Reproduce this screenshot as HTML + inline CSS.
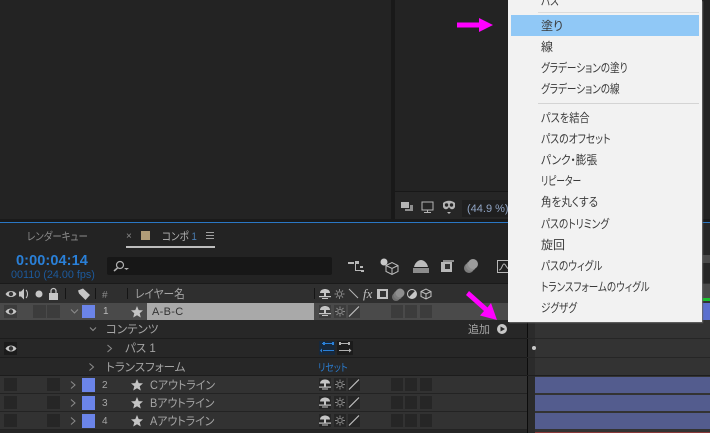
<!DOCTYPE html>
<html lang="ja"><head><meta charset="utf-8">
<style>
html,body{margin:0;padding:0;background:#232323}
#p{position:relative;width:710px;height:433px;overflow:hidden;background:#232323;font-family:"Liberation Sans","Noto Sans CJK JP",sans-serif;font-feature-settings:"palt";color:#a5a5a5;font-size:11.5px}
.b,.t{position:absolute}
.t{white-space:nowrap;line-height:16px;height:16px;transform-origin:0 50%}
.m{position:absolute;left:541px;color:#3a3a3a;font-size:12px;line-height:16px;white-space:nowrap;transform-origin:0 50%}
svg{position:absolute;left:0;top:0}
</style></head><body><div id="p">
<!-- upper panel -->
<div class="b" style="left:391px;top:0;width:4px;height:219px;background:#191919"></div>
<div class="b" style="left:395px;top:192px;width:113px;height:27px;background:#262626"></div>
<div class="b" style="left:395px;top:191px;width:113px;height:1px;background:#181818"></div>
<div class="b" style="left:0;top:219px;width:710px;height:3px;background:#1a1a1a"></div>
<div class="b" style="left:0;top:222px;width:710px;height:1px;background:#2a77c4"></div>
<div class="b" style="left:462px;top:200px;width:46px;height:17px;background:#1f1f1f"></div>
<div class="t" style="left:467px;top:201px;color:#90a4c4;font-size:11px">(44.9 %)</div>
<!-- tabs -->
<div class="t" style="left:27px;top:229px;color:#8c8c8c;font-size:11px;transform:scaleX(.86)">レンダーキュー</div>
<div class="t" style="left:126px;top:229px;color:#8c8c8c;font-size:10px">×</div>
<div class="b" style="left:141px;top:231px;width:9px;height:9px;background:#b09c78"></div>
<div class="t" style="left:162px;top:229px;color:#b5b5b5;font-size:11px;transform:scaleX(.87)">コンポ <span style="color:#4a7fb5">1</span></div>
<div class="b" style="left:126px;top:246px;width:89px;height:2px;background:#bdbdbd"></div>
<!-- timecode -->
<div class="t" style="left:16px;top:253px;color:#2a80d8;font-size:14.5px;font-weight:bold;letter-spacing:.1px">0:00:04:14</div>
<div class="t" style="left:11px;top:267px;color:#1d5a9c;font-size:10.8px">00110 (24.00 fps)</div>
<div class="b" style="left:107px;top:257px;width:225px;height:18px;background:#171717;border-radius:2px"></div>
<!-- header -->
<div class="b" style="left:0;top:283px;width:527px;height:20px;background:#2f2f2f;border-top:1px solid #1a1a1a;box-sizing:border-box"></div>
<div class="b" style="left:65px;top:288px;width:1px;height:11px;background:#151515"></div>
<div class="b" style="left:95px;top:288px;width:1px;height:11px;background:#151515"></div>
<div class="b" style="left:127px;top:288px;width:1px;height:11px;background:#151515"></div>
<div class="b" style="left:314px;top:288px;width:1px;height:11px;background:#151515"></div>
<div class="t" style="left:102px;top:288px;color:#8a8a8a;font-size:10px">#</div>
<div class="t" style="left:135px;top:286px;color:#a5a5a5;font-size:12px;transform:scaleX(.89)">レイヤー名</div>
<!-- rows -->
<div class="b" style="left:0;top:303px;width:527px;height:17px;background:#4a4a4a"></div>
<div class="b" style="left:147px;top:303px;width:167px;height:17px;background:#a9a9a9"></div>
<div class="b" style="left:0;top:320px;width:527px;height:19px;background:#272727;border-bottom:1px solid #1c1c1c;box-sizing:border-box"></div>
<div class="b" style="left:0;top:339px;width:527px;height:19px;background:#272727;border-bottom:1px solid #1c1c1c;box-sizing:border-box"></div>
<div class="b" style="left:0;top:358px;width:527px;height:18px;background:#272727;border-bottom:1px solid #1c1c1c;box-sizing:border-box"></div>
<div class="b" style="left:0;top:376px;width:527px;height:18px;background:#323232;border-bottom:1px solid #232323;box-sizing:border-box"></div>
<div class="b" style="left:0;top:394px;width:527px;height:18px;background:#323232;border-bottom:1px solid #232323;box-sizing:border-box"></div>
<div class="b" style="left:0;top:412px;width:527px;height:18px;background:#323232;border-bottom:1px solid #232323;box-sizing:border-box"></div>
<div class="b" style="left:0;top:430px;width:527px;height:3px;background:#262626"></div>
<!-- boxes -->
<div class="b" style="left:4px;top:305px;width:13px;height:13px;background:#3c3c3c"></div>
<div class="b" style="left:33px;top:305px;width:13px;height:13px;background:#3c3c3c"></div>
<div class="b" style="left:47px;top:305px;width:13px;height:13px;background:#3c3c3c"></div>
<div class="b" style="left:4px;top:342px;width:13px;height:13px;background:#1b1b1b"></div>
<div class="b" style="left:4px;top:378px;width:13px;height:13px;background:#262626"></div><div class="b" style="left:47px;top:378px;width:13px;height:13px;background:#262626"></div>
<div class="b" style="left:4px;top:396px;width:13px;height:13px;background:#262626"></div><div class="b" style="left:47px;top:396px;width:13px;height:13px;background:#262626"></div>
<div class="b" style="left:4px;top:414px;width:13px;height:13px;background:#262626"></div><div class="b" style="left:47px;top:414px;width:13px;height:13px;background:#262626"></div>
<div class="b" style="left:82px;top:305px;width:13px;height:13px;background:#6b84e8"></div>
<div class="b" style="left:82px;top:378px;width:13px;height:14px;background:#6b84e8"></div>
<div class="b" style="left:82px;top:396px;width:13px;height:14px;background:#6b84e8"></div>
<div class="b" style="left:82px;top:414px;width:13px;height:14px;background:#6b84e8"></div>
<!-- switch boxes -->
<div class="b" style="left:319px;top:305px;width:12px;height:13px;background:#3c3c3c"></div><div class="b" style="left:334px;top:305px;width:12px;height:13px;background:#3c3c3c"></div><div class="b" style="left:348px;top:305px;width:12px;height:13px;background:#3c3c3c"></div>
<div class="b" style="left:391px;top:305px;width:12px;height:13px;background:#3c3c3c"></div><div class="b" style="left:405px;top:305px;width:12px;height:13px;background:#3c3c3c"></div><div class="b" style="left:420px;top:305px;width:12px;height:13px;background:#3c3c3c"></div>
<div class="b" style="left:319px;top:378px;width:12px;height:13px;background:#262626"></div><div class="b" style="left:334px;top:378px;width:12px;height:13px;background:#262626"></div><div class="b" style="left:348px;top:378px;width:12px;height:13px;background:#262626"></div>
<div class="b" style="left:391px;top:378px;width:12px;height:13px;background:#262626"></div><div class="b" style="left:405px;top:378px;width:12px;height:13px;background:#262626"></div><div class="b" style="left:420px;top:378px;width:12px;height:13px;background:#262626"></div>
<div class="b" style="left:319px;top:396px;width:12px;height:13px;background:#262626"></div><div class="b" style="left:334px;top:396px;width:12px;height:13px;background:#262626"></div><div class="b" style="left:348px;top:396px;width:12px;height:13px;background:#262626"></div>
<div class="b" style="left:391px;top:396px;width:12px;height:13px;background:#262626"></div><div class="b" style="left:405px;top:396px;width:12px;height:13px;background:#262626"></div><div class="b" style="left:420px;top:396px;width:12px;height:13px;background:#262626"></div>
<div class="b" style="left:319px;top:414px;width:12px;height:13px;background:#262626"></div><div class="b" style="left:334px;top:414px;width:12px;height:13px;background:#262626"></div><div class="b" style="left:348px;top:414px;width:12px;height:13px;background:#262626"></div>
<div class="b" style="left:391px;top:414px;width:12px;height:13px;background:#262626"></div><div class="b" style="left:405px;top:414px;width:12px;height:13px;background:#262626"></div><div class="b" style="left:420px;top:414px;width:12px;height:13px;background:#262626"></div>
<!-- row text -->
<div class="t" style="left:103px;top:304px;color:#bbb;font-size:10px">1</div>
<div class="t" style="left:152px;top:304px;color:#333;font-size:11px;letter-spacing:.3px">A-B-C</div>
<div class="t" style="left:106px;top:322px">コンテンツ</div>
<div class="t" style="left:125px;top:341px">パス 1</div>
<div class="t" style="left:106px;top:360px">トランスフォーム</div>
<div class="t" style="left:318px;top:360px;color:#2a7cd0;font-size:10.5px;transform:scaleX(.85)">リセット</div>
<div class="t" style="left:468px;top:322px;font-size:11px">追加</div>
<div class="t" style="left:102px;top:378px;font-size:10px">2</div><div class="t" style="left:150px;top:378px;transform:scaleX(.95)">Cアウトライン</div>
<div class="t" style="left:102px;top:396px;font-size:10px">3</div><div class="t" style="left:150px;top:396px;transform:scaleX(.95)">Bアウトライン</div>
<div class="t" style="left:102px;top:414px;font-size:10px">4</div><div class="t" style="left:150px;top:414px;transform:scaleX(.95)">Aアウトライン</div>
<!-- timeline -->
<div class="b" style="left:527px;top:283px;width:183px;height:150px;background:#333"></div>
<div class="b" style="left:527px;top:223px;width:183px;height:60px;background:#262626"></div>
<div class="b" style="left:527px;top:283px;width:1px;height:150px;background:#0c0c0c"></div>
<div class="b" style="left:528px;top:283px;width:7px;height:150px;background:#2b2b2b"></div>
<div class="b" style="left:527px;top:338px;width:183px;height:1px;background:#262626"></div>
<div class="b" style="left:527px;top:357px;width:183px;height:1px;background:#262626"></div>
<div class="b" style="left:527px;top:375px;width:183px;height:1px;background:#1e1e1e"></div>
<div class="b" style="left:532px;top:346px;width:4px;height:4px;border-radius:50%;background:#c8c8c8"></div>
<div class="b" style="left:535px;top:377px;width:175px;height:16px;background:#535c8e"></div>
<div class="b" style="left:535px;top:395px;width:175px;height:16px;background:#535c8e"></div>
<div class="b" style="left:535px;top:413px;width:175px;height:16px;background:#535c8e"></div>
<div class="b" style="left:535px;top:432px;width:175px;height:1px;background:#8a3a3a"></div>
<div class="b" style="left:700px;top:255px;width:10px;height:8px;background:#4a4a4a"></div>
<div class="b" style="left:700px;top:284px;width:10px;height:14px;background:#4a4a4a"></div>
<div class="b" style="left:700px;top:298px;width:10px;height:3px;background:#19c22e"></div>
<div class="b" style="left:700px;top:303px;width:10px;height:17px;background:#5b70cf"></div>
<!-- icons -->
<svg width="710" height="433" viewBox="0 0 710 433" fill="none">
<defs>
<g id="eye"><path d="M-5.5 0C-3 -4 3 -4 5.5 0C3 4 -3 4 -5.5 0Z" fill="#c6c6c6"/><circle r="2.2" fill="#333"/></g>
<g id="shy" fill="#c4c4c4"><path d="M-5 -1C-5 -4 -2 -5 0 -5C2 -5 5 -4 5 -1Z"/><rect x="-1" y="-1" width="2" height="4"/><rect x="-6" y="2" width="12" height="1.2"/><rect x="-3" y="4" width="6" height="1"/></g>
<g id="sun" stroke="#8c8c8c" stroke-width="1"><circle r="2.2"/><path d="M0-5V-3M0 3V5M-5 0H-3M3 0H5M-3.5-3.5L-2.2-2.2M3.5-3.5L2.2-2.2M-3.5 3.5L-2.2 2.2M3.5 3.5L2.2 2.2"/></g>
<path id="sl" d="M-5 5L5 -5" stroke="#c0c0c0" stroke-width="1.2"/>
<path id="chr" d="M-2 -3.5L2 0L-2 3.5" stroke="#8c8c8c" stroke-width="1"/>
<path id="star" d="M0-6L1.7-1.9L6-1.6L2.7 1.2L3.8 5.5L0 3.2L-3.8 5.5L-2.7 1.2L-6-1.6L-1.7-1.9Z" fill="#c4c4c4"/>
</defs>
<!-- viewer icons -->
<g fill="#b5b5b5"><rect x="401" y="202" width="8" height="6"/><path d="M410 205h3v6h-8v-2h5z" fill="#8e8e8e"/>
<path d="M422 202h11v8h-11z" fill="none" stroke="#b5b5b5"/><rect x="424" y="212" width="7" height="1"/><rect x="427" y="210" width="1" height="2"/>
<path d="M443 203C446 200 452 200 455 203L455 207C453 211 450 209 449 207C448 209 445 211 443 207Z"/><circle cx="446.500" cy="205" r="1.700" fill="#262626"/><circle cx="451.500" cy="205" r="1.700" fill="#262626"/><path d="M447 212h4l-2 2z"/></g>
<!-- tab menu -->
<path d="M206 232.500h8M206 235.500h8M206 238.500h8" stroke="#a0a0a0"/>
<!-- search -->
<circle cx="120" cy="265" r="3.500" stroke="#b0b0b0" stroke-width="1.200"/><path d="M117.500 268L114 271" stroke="#b0b0b0" stroke-width="1.500"/><path d="M124 268h5l-2.500 2z" fill="#b0b0b0"/>
<!-- toolbar -->
<g fill="#b8b8b8" stroke="none">
<rect x="348" y="262" width="6" height="2"/><rect x="355" y="261" width="4" height="3"/><rect x="360" y="266" width="3" height="2"/><rect x="361" y="270" width="3" height="2"/><path d="M355 264h1v6h5v1h-6z"/>
<circle cx="384" cy="262" r="3.500" fill="#c8c8c8"/>
<path d="M413 268V270H429V268ZM413 270V273H429V270Z" fill="#8c8c8c"/><path d="M414 267C415 262 419 260 421 260C423 260 427 262 428 267Z" fill="#bcbcbc"/>
<rect x="441" y="262" width="11" height="10" fill="#b8b8b8"/><rect x="443" y="260" width="11" height="2" fill="#8c8c8c"/><rect x="445" y="264" width="5" height="5" fill="#333"/>
<circle cx="469" cy="268" r="5" fill="#7c7c7c"/><circle cx="471" cy="266" r="5" fill="#8c8c8c"/><circle cx="473" cy="264" r="5" fill="#9c9c9c"/>
</g>
<path d="M386 265.500l6-3 6 3v6l-6 3-6-3zM386 265.500l6 3 6-3M392 268.500v6" stroke="#c0c0c0" stroke-width="1"/>
<path d="M497.500 260.500h12v12h-12zM499 270c3 0 3-6 5-6s2 4 5 5" stroke="#b8b8b8"/>
<!-- header icons -->
<use href="#eye" x="11" y="294"/>
<path d="M19 291.500h2l3-3v11l-3-3h-2z" fill="#c6c6c6"/><path d="M26 290c2 2 2 6 0 8" stroke="#c6c6c6"/>
<circle cx="39" cy="294" r="3.500" fill="#c6c6c6"/>
<rect x="49" y="293" width="9" height="7" fill="#c6c6c6"/><path d="M51 293v-2a2.500 2.500 0 0 1 5 0v2" stroke="#c6c6c6" stroke-width="1.200"/>
<path d="M78 290.500L83 288.500L90 295L85.500 300L79 293.500Z" fill="#c6c6c6"/>
<use href="#shy" x="325" y="294"/><use href="#sun" x="339.500" y="294"/>
<path d="M349 289L358 298" stroke="#b8b8b8"/>
<text x="363" y="298" fill="#c0c0c0" font-family="Liberation Serif,serif" font-style="italic" font-size="13">fx</text>
<rect x="377" y="289" width="11" height="10" fill="#c0c0c0"/><rect x="380" y="291" width="6" height="6" fill="#333"/>
<circle cx="396" cy="297" r="4" fill="#6e6e6e"/><circle cx="398" cy="295" r="4.500" fill="#7c7c7c"/><circle cx="400" cy="293" r="4.500" fill="#8e8e8e"/>
<circle cx="412" cy="294" r="4.500" stroke="#c8c8c8"/><path d="M408.800 297.200A4.500 4.500 0 0 0 415.200 290.800Z" fill="#c8c8c8"/>
<path d="M421 291.500l5-2.500 5 2.500v5l-5 2.500-5-2.500zM421 291.500l5 2.500 5-2.500M426 294v5" stroke="#c0c0c0"/>
<!-- rows -->
<use href="#eye" x="11" y="311.500"/><use href="#eye" x="11" y="348.500"/>
<path d="M71 309.500L74.500 313L78 309.500" stroke="#8c8c8c"/>
<use href="#star" x="137" y="312"/><use href="#star" x="137" y="385"/><use href="#star" x="137" y="403"/><use href="#star" x="137" y="421"/>
<use href="#shy" x="325" y="311"/><use href="#sun" x="340" y="311.500"/><use href="#sl" x="354" y="311.500"/>
<path d="M90 327.500L93 330.500L96 327.500" stroke="#8c8c8c"/>
<use href="#chr" x="109.500" y="348.500"/><use href="#chr" x="91.500" y="367"/>
<use href="#chr" x="73" y="385"/><use href="#chr" x="73" y="403"/><use href="#chr" x="73" y="421"/>
<use href="#shy" x="325" y="384.500"/><use href="#sun" x="340" y="384.500"/><use href="#sl" x="354" y="384.500"/>
<use href="#shy" x="325" y="402.500"/><use href="#sun" x="340" y="402.500"/><use href="#sl" x="354" y="402.500"/>
<use href="#shy" x="325" y="420.500"/><use href="#sun" x="340" y="420.500"/><use href="#sl" x="354" y="420.500"/>
<!-- path direction -->
<rect x="319" y="341" width="16" height="14" fill="#17283b"/><rect x="337" y="341" width="16" height="14" fill="#1b1b1b"/>
<path d="M322 343.500H333M323 350.500H334" stroke="#2a80d8"/><path d="M321 348.500v4l-2-2zM322 342h2v3h-2zM331 342h2v3h-2z" fill="#2a80d8" transform="translate(1 0)"/>
<path d="M339 343.500H350M339 350.500H350" stroke="#b0b0b0"/><path d="M349 348.500v4l2.500-2zM339 342h2v3h-2zM348 342h2v3h-2z" fill="#b0b0b0"/>
<!-- add -->
<circle cx="502" cy="329" r="5" fill="#c8c8c8"/><path d="M500.500 326.500L505 329L500.500 331.500Z" fill="#2a2a2a"/>
</svg>
<!-- menu -->
<div class="b" style="left:508px;top:0;width:194px;height:322px;background:#f2f2f2;box-shadow:1px 1px 1px #666"></div>
<div class="b" style="left:511px;top:15px;width:188px;height:21px;background:#90c8f6"></div>
<div class="b" style="left:538px;top:12px;width:161px;height:1px;background:#dcdcdc"></div>
<div class="b" style="left:538px;top:103px;width:161px;height:1px;background:#d4d4d4"></div>
<div class="m" style="top:-7px;transform:scaleX(.8)">パス</div>
<div class="m" style="top:18px">塗り</div>
<div class="m" style="top:39px">線</div>
<div class="m" style="top:60px;transform:scaleX(.8)">グラデーションの塗り</div>
<div class="m" style="top:81px;transform:scaleX(.8)">グラデーションの線</div>
<div class="m" style="top:110px;transform:scaleX(.85)">パスを結合</div>
<div class="m" style="top:131px;transform:scaleX(.82)">パスのオフセット</div>
<div class="m" style="top:152px;transform:scaleX(.89)">パンク・膨張</div>
<div class="m" style="top:173px;transform:scaleX(.73)">リピーター</div>
<div class="m" style="top:194px;transform:scaleX(.88)">角を丸くする</div>
<div class="m" style="top:216px;transform:scaleX(.81)">パスのトリミング</div>
<div class="m" style="top:237px">旋回</div>
<div class="m" style="top:258px;transform:scaleX(.81)">パスのウィグル</div>
<div class="m" style="top:279px;transform:scaleX(.795)">トランスフォームのウィグル</div>
<div class="m" style="top:300px;transform:scaleX(.8)">ジグザグ</div>
<!-- arrows -->
<svg width="710" height="433" viewBox="0 0 710 433" fill="none">
<path d="M457 22.500H479V18L493 25L479 32V27.500H457Z" fill="#ff00ff"/>
<path d="M469 291L487.500 307.500L491 303L497 320L480 315.500L484 311L466 295Z" fill="#ff00ff"/>
</svg>
</div></body></html>
